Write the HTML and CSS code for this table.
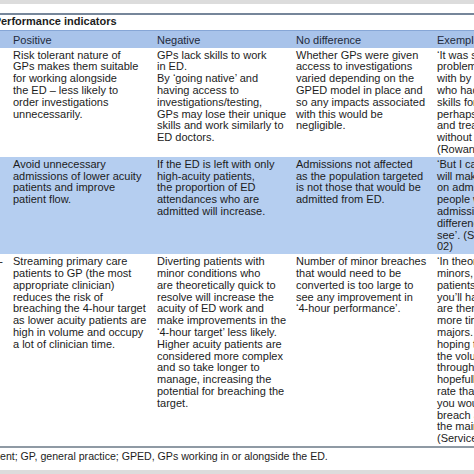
FILE: index.html
```html
<!DOCTYPE html>
<html lang="en">
<head>
<meta charset="utf-8">
<title>Performance indicators</title>
<link rel="stylesheet" href="styles.css">
</head>
<body>
<div class="sheet">
  <div class="title"><span class="cut">P</span>erformance indicators</div>
  <table class="kpi">
    <colgroup>
      <col class="c0"><col class="c1"><col class="c2"><col class="c3"><col class="c4">
    </colgroup>
    <thead>
      <tr>
        <th></th>
        <th>Positive</th>
        <th>Negative</th>
        <th>No difference</th>
        <th>Exemplar quotes</th>
      </tr>
    </thead>
    <tbody>
      <tr>
        <td></td>
        <td>Risk tolerant nature of<br>GPs makes them suitable<br>for working alongside<br>the ED – less likely to<br>order investigations<br>unnecessarily.</td>
        <td>GPs lack skills to work<br>in ED.<br>By ‘going native’ and<br>having access to<br>investigations/testing,<br>GPs may lose their unique<br>skills and work similarly to<br>ED doctors.</td>
        <td>Whether GPs were given<br>access to investigations<br>varied depending on the<br>GPED model in place and<br>so any impacts associated<br>with this would be<br>negligible.</td>
        <td>‘It was seen as a<br>problem that was dealt<br>with by GPs<br>who had the<br>skills for it and<br>perhaps could see<br>and treat patients<br>without tests’.<br>(Rowan, S-01)</td>
      </tr>
      <tr class="alt">
        <td></td>
        <td>Avoid unnecessary<br>admissions of lower acuity<br>patients and improve<br>patient flow.</td>
        <td>If the ED is left with only<br>high-acuity patients,<br>the proportion of ED<br>attendances who are<br>admitted will increase.</td>
        <td>Admissions not affected<br>as the population targeted<br>is not those that would be<br>admitted from ED.</td>
        <td>‘But I can’t see that it<br>will make an impact<br>on admissions as the<br>people we see don’t need<br>admission, so any<br>difference is hard to<br>see’. (Service-<br>02)</td>
      </tr>
      <tr>
        <td class="lead"><span class="cut">Breaching 4-</span></td>
        <td>Streaming primary care<br>patients to GP (the most<br>appropriate clinician)<br>reduces the risk of<br>breaching the 4-hour target<br>as lower acuity patients are<br>high in volume and occupy<br>a lot of clinician time.</td>
        <td>Diverting patients with<br>minor conditions who<br>are theoretically quick to<br>resolve will increase the<br>acuity of ED work and<br>make improvements in the<br>‘4-hour target’ less likely.<br>Higher acuity patients are<br>considered more complex<br>and so take longer to<br>manage, increasing the<br>potential for breaching the<br>target.</td>
        <td>Number of minor breaches<br>that would need to be<br>converted is too large to<br>see any improvement in<br>‘4-hour performance’.</td>
        <td>‘In theory, if you take<br>minors, the simple<br>patients out,<br>you’ll have less that<br>are there and have<br>more time for the<br>majors. We’re<br>hoping to reduce<br>the volume coming<br>through the door and<br>hopefully improve the<br>rate that<br>you would<br>breach at<br>the main ED’.<br>(Service-01)</td>
      </tr>
    </tbody>
  </table>
  <div class="foot"><span class="cut">ED, emergency departm</span>ent; GP, general practice; GPED, GPs working in or alongside the ED.</div>
</div>
</body>
</html>
```

FILE: styles.css
```css
html, body {
  margin: 0;
  padding: 0;
  width: 474px;
  height: 474px;
  overflow: hidden;
  background: #dcdcdc;
}

body {
  font-family: "Liberation Sans", Arial, sans-serif;
  font-size: 11px;
  color: #1c1c1c;
}

.sheet {
  margin-top: 4px;
  height: 466px;
  box-sizing: border-box;
  padding-top: 9px;
  background: #fff;
  overflow: hidden;
}

.title {
  border-top: 2px solid #76869a;
  border-bottom: 1px solid #86a6d6;
  font-weight: bold;
  line-height: 11.8px;
  padding: 1px 0 2px 1px;
  white-space: nowrap;
}

.cut {
  display: inline-flex;
  width: 0;
  justify-content: flex-end;
  white-space: nowrap;
}

.kpi {
  border-collapse: collapse;
  table-layout: fixed;
  width: 600px;
  margin-left: -8px;
}

.kpi .c0 { width: 16px; }
.kpi .c1 { width: 144px; }
.kpi .c2 { width: 139px; }
.kpi .c3 { width: 141px; }
.kpi .c4 { width: 160px; }

.kpi th,
.kpi td {
  padding: 2px 0 1px 5px;
  vertical-align: top;
  text-align: left;
  white-space: nowrap;
  line-height: 11.8px;
  font-weight: normal;
}

.kpi th {
  background: #a8c3ea;
  color: #1f2a3a;
  padding-top: 4px;
  padding-bottom: 1px;
}

.kpi tr.alt td {
  background: #b5cef0;
}

.kpi td.lead {
  padding-left: 11px;
}

.foot {
  border-top: 2px solid #8f9aa4;
  padding-top: 3px;
  font-size: 10.6px;
  line-height: 11.8px;
  white-space: nowrap;
}
```
